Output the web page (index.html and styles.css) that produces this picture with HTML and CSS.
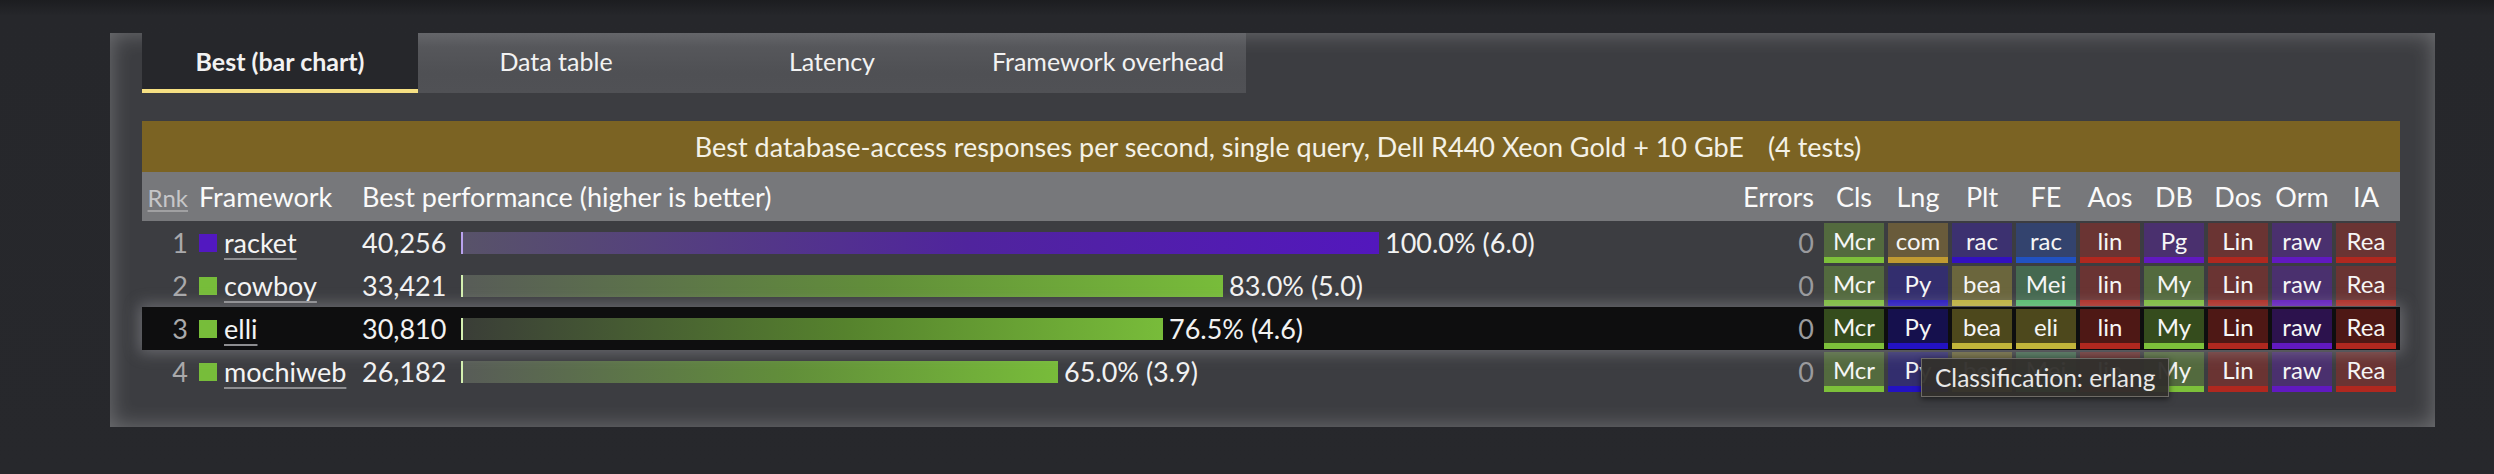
FILE: index.html
```html
<!DOCTYPE html>
<html>
<head>
<meta charset="utf-8">
<link rel="stylesheet" href="styles.css">
</head>
<body>
<div class="page">
  <div class="panel">
    <div class="tabs">
      <div class="tab active">Best (bar chart)</div>
      <div class="tab">Data table</div>
      <div class="tab">Latency</div>
      <div class="tab">Framework overhead</div>
    </div>
    <div class="chart">
      <div class="caption">Best database-access responses per second, single query, Dell R440 Xeon Gold + 10 GbE<span class="tests">(4 tests)</span></div>
      <div class="row head">
        <div class="c-rank"><span class="rnk">Rnk</span></div>
        <div class="c-fw">Framework</div>
        <div class="c-perf">Best performance (higher is better)</div>
        <div class="c-err">Errors</div>
        <div class="c-b">Cls</div><div class="c-b">Lng</div><div class="c-b">Plt</div><div class="c-b">FE</div><div class="c-b">Aos</div><div class="c-b">DB</div><div class="c-b">Dos</div><div class="c-b">Orm</div><div class="c-b">IA</div>
      </div>

      <div class="row">
        <div class="c-rank">1</div>
        <div class="c-fw"><span class="sq purple"></span><a class="name">racket</a></div>
        <div class="c-perf"><span class="num">40,256</span><span class="bar purple" style="width:918px"></span><span class="pct">100.0% (6.0)</span></div>
        <div class="c-err">0</div>
        <div class="c-b"><span class="badge green">Mcr</span></div>
        <div class="c-b"><span class="badge amber">com</span></div>
        <div class="c-b"><span class="badge indigo">rac</span></div>
        <div class="c-b"><span class="badge blue">rac</span></div>
        <div class="c-b"><span class="badge red">lin</span></div>
        <div class="c-b"><span class="badge violet">Pg</span></div>
        <div class="c-b"><span class="badge red">Lin</span></div>
        <div class="c-b"><span class="badge violet">raw</span></div>
        <div class="c-b"><span class="badge red">Rea</span></div>
      </div>

      <div class="row">
        <div class="c-rank">2</div>
        <div class="c-fw"><span class="sq green"></span><a class="name">cowboy</a></div>
        <div class="c-perf"><span class="num">33,421</span><span class="bar green" style="width:762px"></span><span class="pct">83.0% (5.0)</span></div>
        <div class="c-err">0</div>
        <div class="c-b"><span class="badge green">Mcr</span></div>
        <div class="c-b"><span class="badge navy">Py</span></div>
        <div class="c-b"><span class="badge yellow">bea</span></div>
        <div class="c-b"><span class="badge teal">Mei</span></div>
        <div class="c-b"><span class="badge red">lin</span></div>
        <div class="c-b"><span class="badge green">My</span></div>
        <div class="c-b"><span class="badge red">Lin</span></div>
        <div class="c-b"><span class="badge violet">raw</span></div>
        <div class="c-b"><span class="badge red">Rea</span></div>
      </div>

      <div class="row hl">
        <div class="c-rank">3</div>
        <div class="c-fw"><span class="sq green"></span><a class="name">elli</a></div>
        <div class="c-perf"><span class="num">30,810</span><span class="bar green" style="width:702px"></span><span class="pct">76.5% (4.6)</span></div>
        <div class="c-err">0</div>
        <div class="c-b"><span class="badge green">Mcr</span></div>
        <div class="c-b"><span class="badge navy">Py</span></div>
        <div class="c-b"><span class="badge yellow">bea</span></div>
        <div class="c-b"><span class="badge yellow">eli</span></div>
        <div class="c-b"><span class="badge red">lin</span></div>
        <div class="c-b"><span class="badge green">My</span></div>
        <div class="c-b"><span class="badge red">Lin</span></div>
        <div class="c-b"><span class="badge violet">raw</span></div>
        <div class="c-b"><span class="badge red">Rea</span></div>
      </div>

      <div class="row">
        <div class="c-rank">4</div>
        <div class="c-fw"><span class="sq green"></span><a class="name">mochiweb</a></div>
        <div class="c-perf"><span class="num">26,182</span><span class="bar green" style="width:597px"></span><span class="pct">65.0% (3.9)</span></div>
        <div class="c-err">0</div>
        <div class="c-b"><span class="badge green">Mcr</span></div>
        <div class="c-b"><span class="badge navy">Py</span></div>
        <div class="c-b"><span class="badge yellow">bea</span></div>
        <div class="c-b"><span class="badge teal">Mei</span></div>
        <div class="c-b"><span class="badge red">lin</span></div>
        <div class="c-b"><span class="badge green">My</span></div>
        <div class="c-b"><span class="badge red">Lin</span></div>
        <div class="c-b"><span class="badge violet">raw</span></div>
        <div class="c-b"><span class="badge red">Rea</span></div>
      </div>
    </div>
  </div>
  <div class="tooltip">Classification: erlang</div>
</div>
</body>
</html>
```

FILE: styles.css
```css
html, body {
  margin: 0;
  padding: 0;
}
body {
  width: 2494px;
  height: 474px;
  overflow: hidden;
  background: linear-gradient(#1c1d20 0, #26272b 16px, #27282c 100%);
  font-family: Lato, "Noto Sans", sans-serif;
  color: #f2f2f2;
}
.page {
  position: relative;
  padding: 33px 0 0 110px;
}
.panel {
  box-sizing: border-box;
  width: 2325px;
  height: 394px;
  padding: 0 35px 0 32px;
  background: #3c3d41;
  box-shadow: inset 0 0 22px rgba(255, 255, 255, 0.28);
}
.tabs {
  display: flex;
  height: 60px;
}
.tab {
  box-sizing: border-box;
  width: 276px;
  height: 60px;
  display: flex;
  align-items: center;
  justify-content: center;
  padding-bottom: 4px;
  font-size: 25px;
  color: #f2f2f2;
  background: linear-gradient(#65666a 0, #56575b 14px, #4f5054 40px, #505155 100%);
}
.tab.active {
  background: #26272b;
  font-weight: 700;
  border-bottom: 4px solid #f6e083;
  padding-bottom: 0;
}
.chart {
  margin-top: 28px;
  width: 2258px;
}
.caption {
  height: 51px;
  display: flex;
  align-items: center;
  justify-content: center;
  background: #7b6323;
  font-size: 27px;
  color: #f4f1e6;
  padding-left: 14px;
}
.caption .tests {
  margin-left: 24px;
}
.row {
  display: grid;
  grid-template-columns: 57px 163px 1378px 82px repeat(9, 64px);
  height: 43px;
  align-items: center;
  font-size: 27px;
}
.row.head {
  height: 49px;
  background: #77787b;
}
.row.hl {
  background: #0e0e0f;
  box-shadow: 0 0 14px 3px rgba(190, 190, 195, 0.35);
  position: relative;
}
.c-rank {
  text-align: right;
  padding-right: 11px;
  color: #a9a9ab;
}
.rnk {
  color: #c6c6c8;
  font-size: 24px;
  text-decoration: underline;
  text-decoration-color: #a0a0a2;
  text-underline-offset: 3px;
}
.c-fw {
  display: flex;
  align-items: center;
  white-space: nowrap;
}
.head .c-fw, .head .c-perf {
  color: #fafafa;
}
.sq {
  width: 18px;
  height: 18px;
  margin-right: 7px;
  flex: none;
}
.sq.purple { background: #5218c0; }
.sq.green { background: #77bd3a; }
.name {
  color: #f4f4f4;
  text-decoration: underline;
  text-decoration-color: #8d8d90;
  text-decoration-thickness: 2px;
  text-underline-offset: 5px;
}
.c-perf {
  display: flex;
  align-items: center;
  white-space: nowrap;
}
.num {
  width: 82px;
  text-align: right;
  margin-right: 17px;
}
.bar {
  box-sizing: border-box;
  height: 22px;
  flex: none;
}
.bar.purple {
  border-left: 2px solid #b9a2ee;
  background: linear-gradient(90deg, rgba(130, 115, 165, 0.4) 0%, rgba(85, 30, 180, 0.8) 55%, #5317bd 100%);
}
.bar.green {
  border-left: 2px solid #d4f0b0;
  background: linear-gradient(90deg, rgba(140, 150, 130, 0.35) 0%, rgba(110, 170, 55, 0.75) 55%, #78bc3a 100%);
}
.pct {
  margin-left: 6px;
}
.c-err {
  text-align: right;
  padding-right: 8px;
  color: #9a9a9d;
}
.head .c-err {
  color: #fafafa;
}
.c-b {
  text-align: center;
  align-self: start;
}
.head .c-b {
  align-self: center;
  color: #fafafa;
}
.badge {
  box-sizing: border-box;
  display: flex;
  align-items: center;
  justify-content: center;
  margin: 2px 2px 0;
  height: 40px;
  border-bottom: 6px solid;
  font-size: 24px;
  color: #f6f6f6;
}
.badge.green  { background: rgba(125, 192, 58, 0.35);  border-color: #7dc03a; }
.badge.amber  { background: rgba(190, 150, 50, 0.35);  border-color: #c09a32; }
.badge.indigo { background: rgba(60, 30, 200, 0.35);   border-color: #3310c0; }
.badge.blue   { background: rgba(35, 80, 195, 0.35);   border-color: #2152c2; }
.badge.red    { background: rgba(175, 40, 30, 0.4);    border-color: #b0281f; }
.badge.violet { background: rgba(100, 25, 195, 0.35);  border-color: #6119c0; }
.badge.navy   { background: rgba(35, 20, 195, 0.35);   border-color: #2312c2; }
.badge.yellow { background: rgba(195, 180, 55, 0.35);  border-color: #c2b53a; }
.badge.teal   { background: rgba(85, 190, 110, 0.35);  border-color: #56be6e; }
.tooltip {
  position: absolute;
  left: 1921px;
  top: 358px;
  box-sizing: border-box;
  height: 39px;
  padding: 0 13px;
  display: flex;
  align-items: center;
  background: rgba(50, 48, 45, 0.96);
  border: 1px solid #6e6b66;
  box-shadow: 0 2px 6px rgba(0, 0, 0, 0.55);
  font-size: 24.5px;
  color: #e8e8e8;
  white-space: nowrap;
}
```
